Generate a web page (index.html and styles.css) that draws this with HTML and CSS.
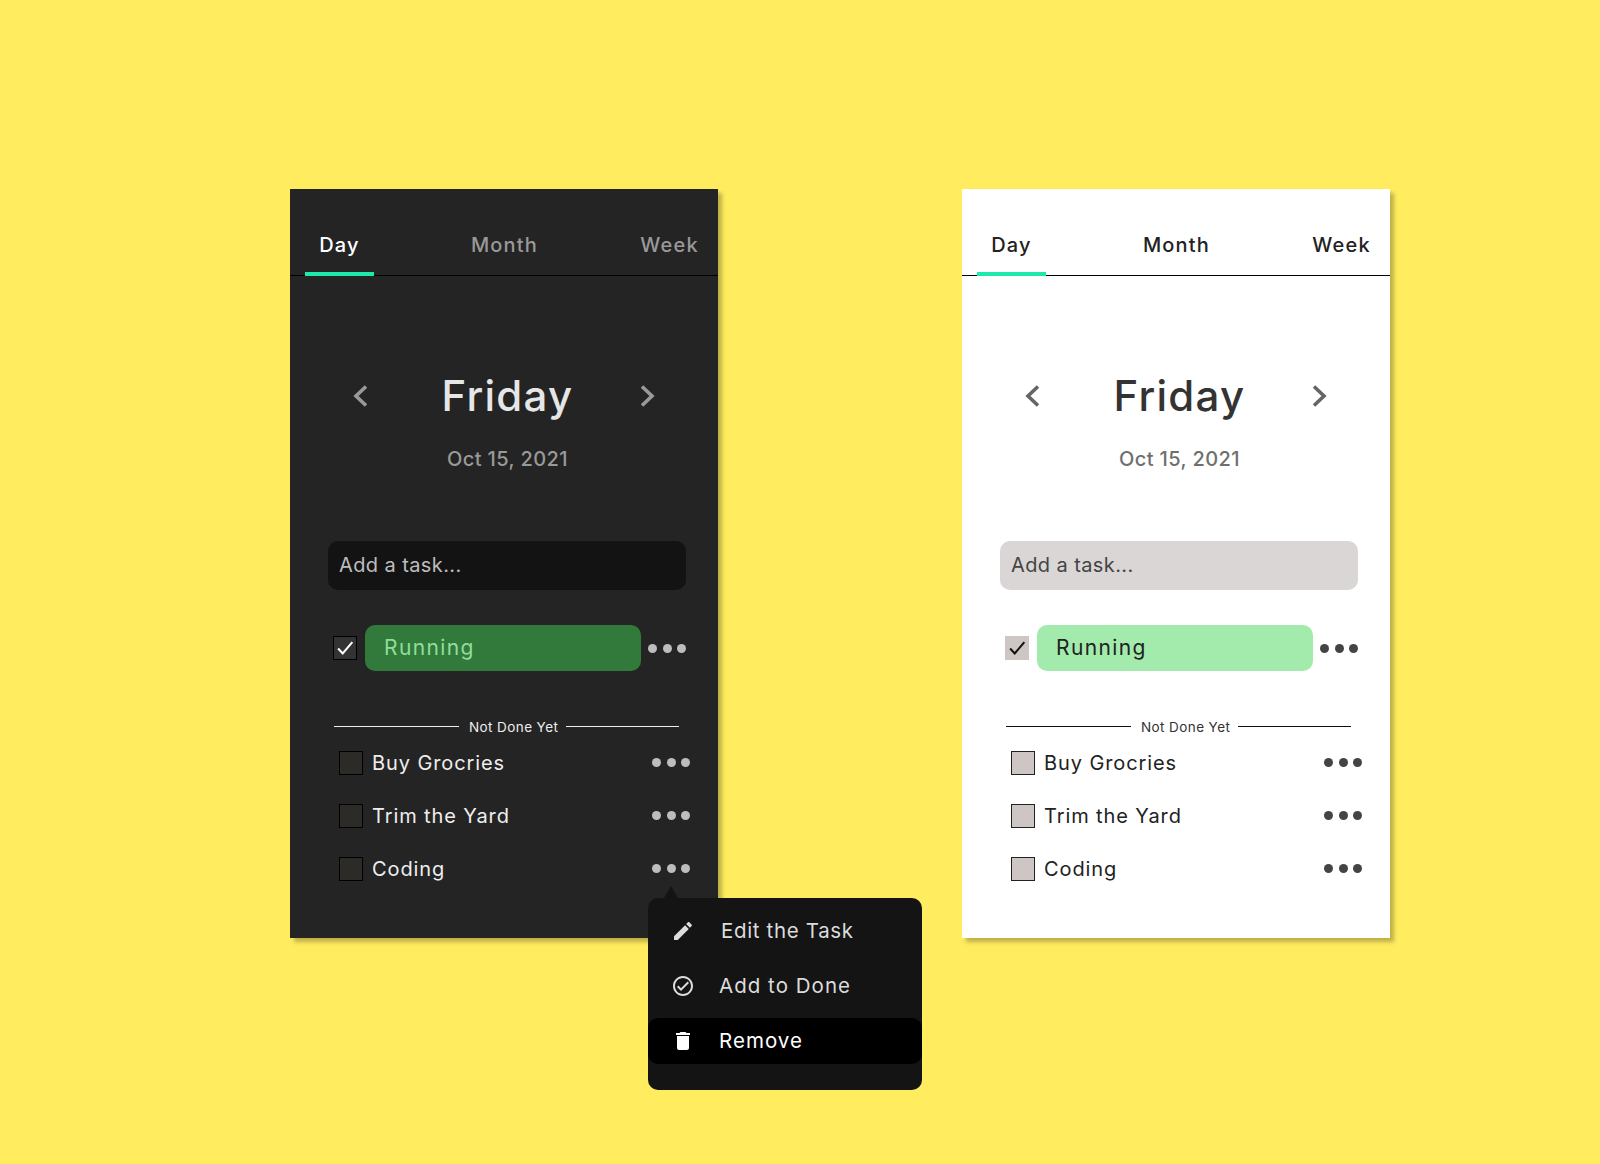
FILE: index.html
```html
<!DOCTYPE html>
<html lang="en">
<head>
<meta charset="utf-8">
<title>Daily tasks</title>
<link rel="stylesheet" href="styles.css">
</head>
<body>
<main class="stage">

  <section class="panel panel-dark">
    <nav class="tabs">
      <a class="tab tab-active">Day</a>
      <a class="tab">Month</a>
      <a class="tab">Week</a>
    </nav>
    <div class="day-nav">
      <svg class="chev" viewBox="0 0 16 24"><path d="M14 2.500 4 12l10 9.500"/></svg>
      <h1 class="day-title">Friday</h1>
      <svg class="chev" viewBox="0 0 16 24"><path d="M2 2.500 12 12 2 21.500"/></svg>
    </div>
    <p class="day-date">Oct 15, 2021</p>
    <div class="add-task">Add a task...</div>
    <div class="done-row">
      <span class="box box-done"><svg viewBox="0 0 24 24"><path d="M4.500 12.500 9.500 18 20 5.500"/></svg></span>
      <span class="pill">Running</span>
      <span class="dots"><i></i><i></i><i></i></span>
    </div>
    <div class="divider"><span class="rule rule-left"></span><span class="divider-label">Not Done Yet</span><span class="rule rule-right"></span></div>
    <div class="task"><span class="box"></span><span class="task-name">Buy Grocries</span><span class="dots"><i></i><i></i><i></i></span></div>
    <div class="task"><span class="box"></span><span class="task-name">Trim the Yard</span><span class="dots"><i></i><i></i><i></i></span></div>
    <div class="task"><span class="box"></span><span class="task-name">Coding</span><span class="dots"><i></i><i></i><i></i></span></div>

    <div class="menu">
      <div class="menu-item">
        <svg class="menu-icon" viewBox="0 0 24 24"><path d="M3 17.250V21h3.750L17.810 9.940l-3.750-3.750L3 17.250zM20.710 7.040c.39-.39.39-1.020 0-1.410l-2.340-2.340c-.39-.39-1.020-.39-1.410 0l-1.830 1.830 3.750 3.750 1.830-1.830z"/></svg>
        <span class="menu-label menu-label-edit">Edit the Task</span>
      </div>
      <div class="menu-item">
        <svg class="menu-icon" viewBox="0 0 24 24"><path d="M12 2C6.480 2 2 6.480 2 12s4.480 10 10 10 10-4.480 10-10S17.520 2 12 2zm0 18c-4.410 0-8-3.590-8-8s3.590-8 8-8 8 3.590 8 8-3.590 8-8 8zm4.590-12.420L10 14.170l-2.590-2.580L6 13l4 4 8-8z"/></svg>
        <span class="menu-label">Add to Done</span>
      </div>
      <div class="menu-item menu-item-active">
        <svg class="menu-icon" viewBox="0 0 24 24"><path d="M6 19c0 1.100.9 2 2 2h8c1.100 0 2-.9 2-2V7H6v12zM19 4h-3.500l-1-1h-5l-1 1H5v2h14V4z"/></svg>
        <span class="menu-label">Remove</span>
      </div>
    </div>
  </section>

  <section class="panel panel-light">
    <nav class="tabs">
      <a class="tab tab-active">Day</a>
      <a class="tab">Month</a>
      <a class="tab">Week</a>
    </nav>
    <div class="day-nav">
      <svg class="chev" viewBox="0 0 16 24"><path d="M14 2.500 4 12l10 9.500"/></svg>
      <h1 class="day-title">Friday</h1>
      <svg class="chev" viewBox="0 0 16 24"><path d="M2 2.500 12 12 2 21.500"/></svg>
    </div>
    <p class="day-date">Oct 15, 2021</p>
    <div class="add-task">Add a task...</div>
    <div class="done-row">
      <span class="box box-done"><svg viewBox="0 0 24 24"><path d="M4.500 12.500 9.500 18 20 5.500"/></svg></span>
      <span class="pill">Running</span>
      <span class="dots"><i></i><i></i><i></i></span>
    </div>
    <div class="divider"><span class="rule rule-left"></span><span class="divider-label">Not Done Yet</span><span class="rule rule-right"></span></div>
    <div class="task"><span class="box"></span><span class="task-name">Buy Grocries</span><span class="dots"><i></i><i></i><i></i></span></div>
    <div class="task"><span class="box"></span><span class="task-name">Trim the Yard</span><span class="dots"><i></i><i></i><i></i></span></div>
    <div class="task"><span class="box"></span><span class="task-name">Coding</span><span class="dots"><i></i><i></i><i></i></span></div>
  </section>

</main>
</body>
</html>
```

FILE: styles.css
```css
* { box-sizing: border-box; }

html, body { margin: 0; background: #ffec5f; }

body { font-family: Inter, "Liberation Sans", sans-serif; }

.stage {
  display: flex;
  gap: 244px;
  min-height: 1164px;
  padding: 189px 0 0 290px;
}

.panel {
  position: relative;
  flex: none;
  width: 428px;
  height: 749px;
  box-shadow: 4px 4px 4px rgba(0, 0, 0, 0.25);
  letter-spacing: 0.04em;
}

.panel-dark {
  --bg: #242424;
  --line: #000;
  --tab: #999;
  --tab-active: #fff;
  --title: #e6e6e6;
  --date: #999;
  --chev: #999;
  --input-bg: #141313;
  --input-text: #bdbdbd;
  --pill-bg: #317a3b;
  --pill-text: #92dd9a;
  --dot: #bdbdbd;
  --rule: #eee;
  --divider-text: #eee;
  --task: #eee;
  --box-bg: #2d2b28;
  --box-border: #000;
  --done-bg: #333;
  --done-border: #000;
  --check: #fff;
  background: var(--bg);
  z-index: 1;
}

.panel-light {
  --bg: #fff;
  --line: #000;
  --tab: #222;
  --tab-active: #222;
  --title: #333;
  --date: #6f6f6f;
  --chev: #666;
  --input-bg: #d9d6d5;
  --input-text: #444;
  --pill-bg: #a2ebac;
  --pill-text: #222;
  --dot: #444;
  --rule: #111;
  --divider-text: #333;
  --task: #222;
  --box-bg: #cec5c5;
  --box-border: #222;
  --done-bg: #cec5c5;
  --done-border: #cec5c5;
  --check: #111;
  background: var(--bg);
}

/* Tabs */
.tabs {
  display: flex;
  align-items: flex-end;
  gap: 96px;
  height: 87px;
  padding-left: 15px;
  border-bottom: 1px solid var(--line);
}

.tab {
  flex: none;
  width: 69px;
  height: 47px;
  margin-bottom: -1px;
  padding-top: 4px;
  font-size: 20px;
  font-weight: 500;
  line-height: 24px;
  letter-spacing: 0.06em;
  text-align: center;
  white-space: nowrap;
  color: var(--tab);
}

.tab-active {
  color: var(--tab-active);
  border-bottom: 4px solid #1de9ac;
}

/* Day heading */
.day-nav {
  display: flex;
  align-items: center;
  justify-content: space-between;
  height: 48px;
  margin-top: 96px;
  padding: 0 62px;
}

.chev {
  flex: none;
  width: 16px;
  height: 24px;
  fill: none;
  stroke: var(--chev);
  stroke-width: 3.600;
}

.day-title {
  margin: 0 0 0 7px;
  font-size: 42px;
  font-weight: 500;
  line-height: 48px;
  letter-spacing: 0.03em;
  color: var(--title);
}

.day-date {
  height: 24px;
  margin: 27px 0 0;
  padding-left: 7px;
  font-size: 20px;
  font-weight: 500;
  line-height: 24px;
  letter-spacing: 0.02em;
  text-align: center;
  color: var(--date);
}

/* Input */
.add-task {
  width: 358px;
  height: 49px;
  margin: 70px 0 0 38px;
  padding-left: 11px;
  border-radius: 10px;
  font-size: 20px;
  line-height: 48px;
  letter-spacing: 0.02em;
  background: var(--input-bg);
  color: var(--input-text);
}

/* Completed task */
.done-row {
  display: flex;
  align-items: center;
  height: 46px;
  margin-top: 35px;
  padding-left: 43px;
}

.pill {
  flex: none;
  width: 276px;
  height: 46px;
  margin-left: 8px;
  padding-left: 19px;
  border-radius: 10px;
  font-size: 21px;
  line-height: 46px;
  letter-spacing: 0.065em;
  background: var(--pill-bg);
  color: var(--pill-text);
}

.box {
  flex: none;
  display: block;
  width: 24px;
  height: 24px;
  border: 1px solid var(--box-border);
  background: var(--box-bg);
}

.box-done {
  border-color: var(--done-border);
  background: var(--done-bg);
}

.box-done svg {
  display: block;
  width: 22px;
  height: 22px;
  fill: none;
  stroke: var(--check);
  stroke-width: 2.200;
}

.dots {
  flex: none;
  display: flex;
  gap: 5.500px;
  margin-left: 7px;
}

.dots i {
  display: block;
  width: 9px;
  height: 9px;
  border-radius: 50%;
  background: var(--dot);
}

/* Divider */
.divider {
  display: flex;
  align-items: center;
  width: 345px;
  height: 18px;
  margin: 47px 0 0 44px;
}

.rule {
  display: block;
  height: 1px;
  margin-top: -2px;
  background: var(--rule);
}

.rule-left { flex: none; width: 125px; }
.rule-right { flex: 1; }

.divider-label {
  margin: 0 8px 0 10px;
  font-size: 13.500px;
  line-height: 17px;
  letter-spacing: 0.03em;
  white-space: nowrap;
  color: var(--divider-text);
}

/* Task rows */
.task {
  display: flex;
  align-items: center;
  height: 53px;
  padding: 0 28px 0 49px;
}

.task-name {
  margin-left: 9px;
  font-size: 20px;
  letter-spacing: 0.045em;
  white-space: nowrap;
  color: var(--task);
}

.task .dots { margin-left: auto; }

/* Context menu */
.menu {
  position: absolute;
  top: 709px;
  left: 358px;
  display: flex;
  flex-direction: column;
  gap: 9px;
  width: 274px;
  height: 192px;
  padding-top: 10px;
  border-radius: 10px;
  background: #141414;
  color: #dcdcdc;
}

.menu::before {
  content: "";
  position: absolute;
  top: -12px;
  left: 16px;
  border-left: 7px solid transparent;
  border-right: 7px solid transparent;
  border-bottom: 12px solid #141414;
}

.menu-item {
  display: flex;
  align-items: center;
  height: 46px;
  padding-left: 23px;
  border-radius: 10px;
  font-size: 20.500px;
  letter-spacing: 0.05em;
}

.menu-item-active {
  background: #000;
  color: #fff;
}

.menu-icon {
  flex: none;
  width: 24px;
  height: 24px;
  fill: currentColor;
}

.menu-label { margin: -1px 0 0 24px; }
.menu-label-edit { margin-left: 26px; letter-spacing: 0.032em; }
```
